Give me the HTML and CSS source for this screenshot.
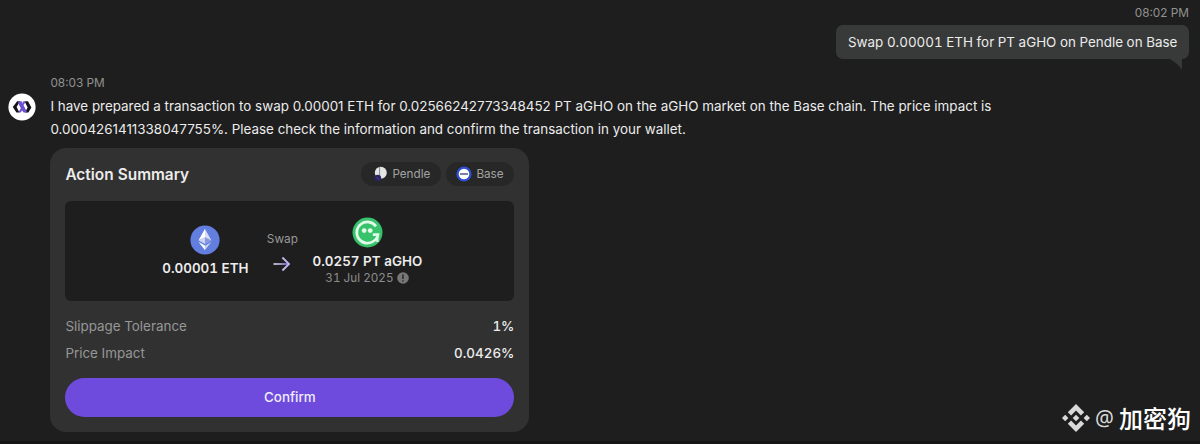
FILE: index.html
```html
<!DOCTYPE html>
<html lang="en">
<head>
  <meta charset="UTF-8">
  <title>Chat</title>
  <link rel="stylesheet" href="styles.css">
</head>
<body>
  <main class="chat">
    <div class="message-user">
      <span class="time">08:02 PM</span>
      <div class="bubble">
        Swap 0.00001 ETH for PT aGHO on Pendle on Base
        <svg class="bubble-tail" width="14" height="12" viewBox="0 0 14 12"><path d="M0 0H14V12C11 7 6 3 0 0Z" fill="#383a39"/></svg>
      </div>
    </div>

    <div class="message-bot">
      <svg class="avatar" width="28" height="28" viewBox="0 0 28 28">
        <circle cx="14" cy="14" r="13.6" fill="#fff"/>
        <path d="M9.2 8.2H12L8.6 14L11.4 19.4H8.4L4.8 14Z" fill="#151518"/>
        <path d="M16.6 8.2H20L23.4 14.4L20.4 19.6H17L19.6 14.4Z" fill="#151518"/>
        <path d="M11 8.2H13.6L19.2 19.6H15.6L14 17.4L12.6 19.4H10.4L12.8 15.2L10 9.8Z" fill="#6d50d0"/>
        <path d="M15.4 8.2H17.8L15.6 12.2L14.4 10Z" fill="#6d50d0"/>
      </svg>
      <div class="content">
        <span class="time">08:03 PM</span>
        <p class="text">I have prepared a transaction to swap 0.00001 ETH for 0.02566242773348452 PT aGHO on the aGHO market on the Base chain. The price impact is<br>0.0004261411338047755%. Please check the information and confirm the transaction in your wallet.</p>

        <section class="card">
          <div class="card-header">
            <h2>Action Summary</h2>
            <div class="tags">
              <span class="tag tag-pendle">
                <svg width="14" height="16" viewBox="0 0 14 16">
                  <circle cx="7.8" cy="6.8" r="6" fill="#e4e5e6"/>
                  <path d="M6.6 1V9.5" stroke="#8b8d92" stroke-width="1"/>
                  <circle cx="4.8" cy="12" r="3.3" fill="#29245f"/>
                  <path d="M3.4 11L6.4 14" stroke="#5148b0" stroke-width=".8"/>
                </svg>
                Pendle
              </span>
              <span class="tag tag-base">
                <svg width="16" height="16" viewBox="0 0 16 16">
                  <circle cx="8" cy="8" r="7.6" fill="#2f4fd0"/>
                  <circle cx="8" cy="8" r="5.3" fill="#fff"/>
                  <path d="M4 8H12" stroke="#333d70" stroke-width="1.3"/>
                </svg>
                Base
              </span>
            </div>
          </div>

          <div class="swap">
            <div class="token token-from">
              <svg width="30" height="30" viewBox="0 0 30 30">
                <circle cx="15" cy="15" r="14.6" fill="#627edf"/>
                <path d="M15 4L8.7 15.2L15 18.8L21.3 15.2Z" fill="#d7dcf7"/>
                <path d="M15 4V18.8L8.7 15.2Z" fill="#fff"/>
                <path d="M15 12.3L8.7 15.2L15 18.8L21.3 15.2Z" fill="#8797dd"/>
                <path d="M15 12.3V18.8L8.7 15.2Z" fill="#ccd3f4"/>
                <path d="M8.7 17L15 25L21.3 17L15 20.7Z" fill="#c9d1f5"/>
                <path d="M8.7 17L15 25V20.7Z" fill="#fff"/>
              </svg>
              <strong>0.00001 ETH</strong>
            </div>
            <div class="direction">
              <span>Swap</span>
              <svg width="18" height="16" viewBox="0 0 18 16">
                <defs>
                  <linearGradient id="arrow">
                    <stop offset="0" stop-color="#e2e0ea"/>
                    <stop offset="1" stop-color="#7f6ff0"/>
                  </linearGradient>
                </defs>
                <path d="M.5 7.2H16V8.8H.5Z" fill="url(#arrow)"/>
                <path d="M9.4 1.5L16 8L9.4 14.5" fill="none" stroke="#c1b8ee" stroke-width="1.8"/>
              </svg>
            </div>
            <div class="token token-to">
              <svg width="31" height="31" viewBox="0 0 31 31">
                <circle cx="15.5" cy="15.5" r="15" fill="#37c36b"/>
                <path d="M24 9.4A10.6 10.6 0 1 0 21.8 24C24.4 22.2 25.6 20 26 17.6H20.8" fill="none" stroke="#e2fbe9" stroke-width="2.7"/>
                <path d="M25.4 17V25" stroke="#e2fbe9" stroke-width="2.2"/>
                <circle cx="12.2" cy="13.6" r="2.4" fill="#e2fbe9"/>
                <circle cx="18.2" cy="13.6" r="2.4" fill="#e2fbe9"/>
              </svg>
              <strong>0.0257 PT aGHO</strong>
              <span class="expiry">31 Jul 2025
                <svg width="12" height="12" viewBox="0 0 12 12">
                  <circle cx="6" cy="6" r="5.8" fill="#777"/>
                  <path d="M6 2.5V7M6 8.2V9.6" stroke="#222" stroke-width="1.4"/>
                </svg>
              </span>
            </div>
          </div>

          <div class="row"><span>Slippage Tolerance</span><b>1%</b></div>
          <div class="row row-impact"><span>Price Impact</span><b>0.0426%</b></div>
          <button class="confirm" type="button">Confirm</button>
        </section>
      </div>
    </div>
  </main>

  <div class="watermark">
    <svg width="28" height="28" viewBox="0 0 28 28" fill="#d9d9d9">
      <path d="M14 0L22.2 8.2L18.9 11.5L14 6.6L9.1 11.5L5.8 8.2Z"/>
      <path d="M14 28L22.2 19.8L18.9 16.5L14 21.4L9.1 16.5L5.8 19.8Z"/>
      <path d="M3.2 10.8L6.4 14L3.2 17.2L0 14Z"/>
      <path d="M24.8 10.8L28 14L24.8 17.2L21.6 14Z"/>
      <path d="M14 10.7L17.3 14L14 17.3L10.7 14Z"/>
    </svg>
    <span class="at">@</span>
    <span class="author">加密狗</span>
  </div>
</body>
</html>
```
FILE: styles.css
```css
* {
  box-sizing: border-box;
}

body {
  margin: 0;
  height: 444px;
  overflow: hidden;
  background-color: #1e1e1e;
  border-bottom: 3px solid #161616;
  color: #ececec;
  font-family: Inter, "Liberation Sans", sans-serif;
  font-size: 13.42px;
}

svg {
  display: block;
  flex-shrink: 0;
}

.chat {
  padding: 5px 11px 0 8px;
}

.time {
  display: block;
  font-size: 11.8px;
  line-height: 17px;
  color: #919191;
}

.message-user {
  display: flex;
  flex-direction: column;
  align-items: flex-end;
}

.bubble {
  position: relative;
  width: 353px;
  height: 34px;
  margin-top: 3px;
  padding-left: 12px;
  border-radius: 7px;
  background-color: #383a39;
  line-height: 35px;
  white-space: nowrap;
  font-variant-numeric: tabular-nums;
}

.bubble-tail {
  position: absolute;
  right: 7px;
  top: 33px;
}

.message-bot {
  display: flex;
  gap: 14.4px;
  margin-top: 16px;
}

.avatar {
  margin-top: 18px;
}

.text {
  margin: 3px 0 7px;
  line-height: 23px;
  white-space: nowrap;
}

.card {
  width: 479px;
  height: 284px;
  padding: 14px 15px 15px;
  border-radius: 16px;
  background-color: #313131;
  font-variant-numeric: tabular-nums;
}

.card-header {
  display: flex;
  align-items: center;
  justify-content: space-between;
  height: 24px;
}

.card-header h2 {
  margin: 0;
  font-size: 15.4px;
  font-weight: 600;
}

.tags {
  display: flex;
  gap: 5px;
}

.tag {
  display: flex;
  align-items: center;
  gap: 5px;
  height: 24px;
  padding-left: 12px;
  border-radius: 12px;
  background-color: #272727;
  color: #a2a2a2;
  font-size: 11.7px;
  line-height: 17px;
}

.tag-pendle {
  width: 80px;
}

.tag-base {
  width: 68px;
  padding-left: 10px;
  gap: 4px;
}

.swap {
  display: flex;
  height: 100px;
  margin: 15px 0 13px;
  padding-left: 91px;
  border-radius: 6px;
  background-color: #1e1e1e;
}

.token {
  display: flex;
  flex-direction: column;
  align-items: center;
  white-space: nowrap;
}

.token strong {
  font-weight: 600;
  line-height: 20px;
}

.token-from {
  width: 98px;
  padding-top: 23.5px;
}

.token-from strong {
  margin-top: 3.5px;
}

.direction {
  display: flex;
  flex-direction: column;
  align-items: center;
  gap: 8px;
  width: 56px;
  padding-top: 30px;
  color: #999;
  font-size: 11.8px;
  line-height: 17px;
}

.token-to {
  width: 114px;
  padding-top: 15.5px;
}

.token-to strong {
  margin-top: 3.5px;
}

.expiry {
  display: flex;
  align-items: center;
  gap: 4px;
  color: #8c8c8c;
  font-size: 11.7px;
  line-height: 14px;
}

.row {
  display: flex;
  justify-content: space-between;
  line-height: 24px;
  color: #979797;
}

.row b {
  color: #ececec;
  font-weight: 500;
}

.row-impact {
  margin-top: 3px;
}

.confirm {
  display: block;
  width: 100%;
  height: 39px;
  margin-top: 13px;
  padding: 0 0 2px;
  border: none;
  border-radius: 20px;
  background-color: #6e4bdc;
  color: #f1edff;
  font: 500 13.4px Inter, sans-serif;
  cursor: pointer;
}

/* lies over the chat in the bottom right corner */
.watermark {
  position: absolute;
  right: 9px;
  bottom: 11px;
  display: flex;
  align-items: center;
  height: 30px;
  color: #fff;
}

.at {
  margin: 0 5px 0 5px;
  color: #d9d9d9;
  font: 21px "Noto Sans", sans-serif;
}

.author {
  font: 500 24px "Noto Sans CJK SC", sans-serif;
  line-height: 30px;
}
```
